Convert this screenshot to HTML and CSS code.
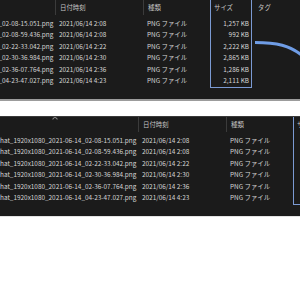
FILE: index.html
```html
<!doctype html>
<html lang="ja">
<head>
    <meta charset="UTF-8" />
    <title>サイズ列</title>
    <link rel="stylesheet" href="styles.css">
</head>
<body>
<section class="panel panel-top">
    <div class="table">
        <div class="rows">
            <div class="row head">
                <div class="th th-name"></div>
                <div class="th">日付時刻</div>
                <div class="th">種類</div>
                <div class="th th-size">サイズ</div>
                <div class="th th-tag">タグ</div>
            </div>
            <div class="row">
                <div class="td name">Chat_1920x1080_2021-06-14_02-08-15.051.png</div>
                <div class="td">2021/06/14 2:08</div>
                <div class="td">PNG ファイル</div>
                <div class="td size">1,257 KB</div>
            </div>
            <div class="row">
                <div class="td name">Chat_1920x1080_2021-06-14_02-08-59.436.png</div>
                <div class="td">2021/06/14 2:08</div>
                <div class="td">PNG ファイル</div>
                <div class="td size">992 KB</div>
            </div>
            <div class="row">
                <div class="td name">Chat_1920x1080_2021-06-14_02-22-33.042.png</div>
                <div class="td">2021/06/14 2:22</div>
                <div class="td">PNG ファイル</div>
                <div class="td size">2,222 KB</div>
            </div>
            <div class="row">
                <div class="td name">Chat_1920x1080_2021-06-14_02-30-36.984.png</div>
                <div class="td">2021/06/14 2:30</div>
                <div class="td">PNG ファイル</div>
                <div class="td size">2,865 KB</div>
            </div>
            <div class="row">
                <div class="td name">Chat_1920x1080_2021-06-14_02-36-07.764.png</div>
                <div class="td">2021/06/14 2:36</div>
                <div class="td">PNG ファイル</div>
                <div class="td size">1,286 KB</div>
            </div>
            <div class="row">
                <div class="td name">Chat_1920x1080_2021-06-14_04-23-47.027.png</div>
                <div class="td">2021/06/14 4:23</div>
                <div class="td">PNG ファイル</div>
                <div class="td size">2,111 KB</div>
            </div>
        </div>
        <div class="mark"></div>
    </div>
    <!-- 矢印の線 -->
    <svg class="arrow" width="60" height="40" viewBox="250 30 60 40">
        <path d="M255 42.5 C276 42.5 290 45 304 57" fill="none" stroke="#6f9de6" stroke-width="3"/>
    </svg>
</section>

<div class="gap"></div>

<section class="panel panel-bottom">
    <div class="table">
        <div class="rows">
            <div class="row head">
                <div class="th th-name"><span class="caret"></span></div>
                <div class="th">日付時刻</div>
                <div class="th">種類</div>
                <div class="th th-size">サイズ</div>
                <div class="th th-tag">タグ</div>
            </div>
            <div class="row">
                <div class="td name">Chat_1920x1080_2021-06-14_02-08-15.051.png</div>
                <div class="td">2021/06/14 2:08</div>
                <div class="td">PNG ファイル</div>
                <div class="td size">1,257 KB</div>
            </div>
            <div class="row">
                <div class="td name">Chat_1920x1080_2021-06-14_02-08-59.436.png</div>
                <div class="td">2021/06/14 2:08</div>
                <div class="td">PNG ファイル</div>
                <div class="td size">992 KB</div>
            </div>
            <div class="row">
                <div class="td name">Chat_1920x1080_2021-06-14_02-22-33.042.png</div>
                <div class="td">2021/06/14 2:22</div>
                <div class="td">PNG ファイル</div>
                <div class="td size">2,222 KB</div>
            </div>
            <div class="row">
                <div class="td name">Chat_1920x1080_2021-06-14_02-30-36.984.png</div>
                <div class="td">2021/06/14 2:30</div>
                <div class="td">PNG ファイル</div>
                <div class="td size">2,865 KB</div>
            </div>
            <div class="row">
                <div class="td name">Chat_1920x1080_2021-06-14_02-36-07.764.png</div>
                <div class="td">2021/06/14 2:36</div>
                <div class="td">PNG ファイル</div>
                <div class="td size">1,286 KB</div>
            </div>
            <div class="row">
                <div class="td name">Chat_1920x1080_2021-06-14_04-23-47.027.png</div>
                <div class="td">2021/06/14 4:23</div>
                <div class="td">PNG ファイル</div>
                <div class="td size">2,111 KB</div>
            </div>
        </div>
        <div class="mark"></div>
    </div>
</section>
</body>
</html>
```

FILE: styles.css
```css
body{
    margin: 0;
    background: #fff;
    font-family: "Noto Sans CJK JP", "Noto Sans", sans-serif;
    font-size: 6.4px;
    color: #d6d6d6;
}
.panel{
    height: 99px;
    background: #1b1b1b;
    overflow: hidden;
    position: relative;
}
.panel-top{
    border-bottom: 2px solid #9c9c9c;
}
.panel-bottom{
    border-top: 1px solid #3a3a3a;
    border-bottom: 1px solid #e2e2e2;
}
.gap{
    height: 15px;
}
.table{
    display: grid;
    width: 450px;
}
.rows,
.mark{
    grid-area: 1 / 1;
}
.panel-top .table{
    margin-left: -111px;
}
.panel-bottom .table{
    margin-left: -28px;
}
.row{
    display: grid;
    grid-template-columns: 166px 88px 67px 42px 80px;
    height: 11.6px;
}
.row.head{
    height: 17px;
    margin-bottom: 0.5px;
}
.th{
    color: #c4c4c4;
    padding: 3px 0 0 4px;
    border-left: 1px solid #3b3b3b;
    height: 12px;
    line-height: 9px;
    white-space: nowrap;
}
.th-name{
    border-left: none;
    position: relative;
}
.th-size,
.th-tag{
    border-left: none;
}
.th-tag{
    padding-left: 6px;
}
.td{
    padding-left: 4px;
    white-space: nowrap;
    overflow: hidden;
    line-height: 11.6px;
}
.name{
    padding-left: 24px;
}
.size{
    text-align: right;
    padding-right: 3px;
}
.mark{
    margin-left: 321px;
    width: 40px;
    height: 87px;
    margin-top: -1px;
    border: 1px solid #7b9ad3;
}
.caret{
    position: absolute;
    left: 81px;
    top: 0;
    width: 3px;
    height: 3px;
    border-left: 1px solid #888;
    border-top: 1px solid #888;
    transform: rotate(45deg);
}
.arrow{
    position: absolute;
    left: 250px;
    top: 30px;
}
```
